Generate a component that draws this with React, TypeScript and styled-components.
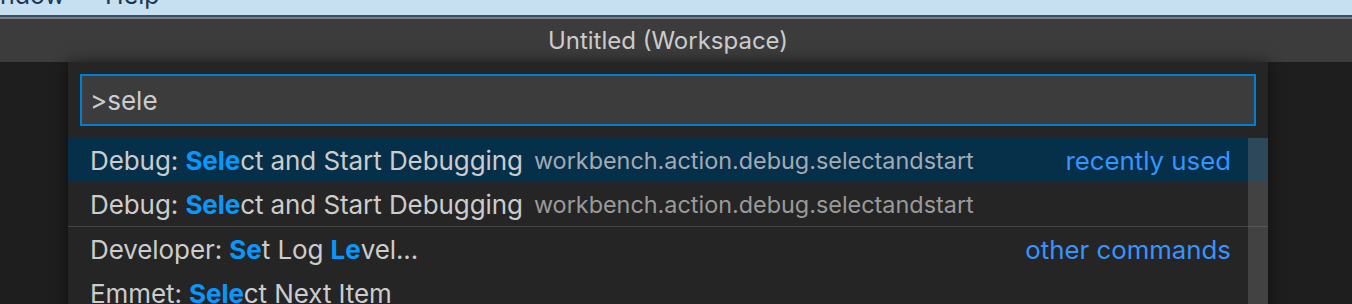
import React from 'react';
import styled, { createGlobalStyle } from 'styled-components';

const GlobalStyle = createGlobalStyle`
  html, body {
    margin: 0;
    padding: 0;
    background: #1e1e1e;
    overflow: hidden;
  }
  body {
    font-family: Inter, "Liberation Sans", sans-serif;
  }
`;

type Part = { text: string; hit?: boolean };

type Command = {
  id: string;
  label: Part[];
  description?: string;
  detail?: string;
  selected?: boolean;
  separatorBefore?: boolean;
};

const commands: Command[] = [
  {
    id: 'debug-recent',
    label: [{ text: 'Debug: ' }, { text: 'Sele', hit: true }, { text: 'ct and Start Debugging' }],
    description: 'workbench.action.debug.selectandstart',
    detail: 'recently used',
    selected: true,
  },
  {
    id: 'debug',
    label: [{ text: 'Debug: ' }, { text: 'Sele', hit: true }, { text: 'ct and Start Debugging' }],
    description: 'workbench.action.debug.selectandstart',
  },
  {
    id: 'log-level',
    label: [
      { text: 'Developer: ' },
      { text: 'Se', hit: true },
      { text: 't Log ' },
      { text: 'Le', hit: true },
      { text: 'vel...' },
    ],
    detail: 'other commands',
    separatorBefore: true,
  },
  {
    id: 'emmet',
    label: [{ text: 'Emmet: ' }, { text: 'Sele', hit: true }, { text: 'ct Next Item' }],
  },
];

const Window = styled.div`
  width: 1352px;
  height: 304px;
  display: flex;
  flex-direction: column;
  overflow: hidden;
`;

const MenuBar = styled.div`
  height: 15px;
  flex: none;
  display: flex;
  gap: 40px;
  background: #c6dff1;
  border-bottom: 2px solid #34506c;
  overflow: hidden;
`;

const MenuItem = styled.span`
  font-size: 25px;
  line-height: 26px;
  margin-top: -18px;
  color: #1d3652;
  white-space: nowrap;
`;

const TitleBar = styled.div`
  height: 43px;
  flex: none;
  display: flex;
  align-items: center;
  justify-content: center;
  padding-right: 16px;
  background: #3c3c3c;
  border-top: 2px solid #7d7d7d;
  color: #cccccc;
  font-size: 24px;
`;

const Workbench = styled.div`
  flex: 1;
  display: flex;
  padding-left: 68px;
  background: #1e1e1e;
`;

const QuickPick = styled.div`
  position: relative;
  width: 1200px;
  padding-top: 12px;
  background: #252526;
  box-shadow: 0 0 14px rgba(0, 0, 0, 0.55);
`;

const InputBox = styled.div`
  margin: 0 12px;
  height: 48px;
  display: flex;
  align-items: center;
  padding: 0 8px;
  background: #3c3c3c;
  border: 2px solid #007fd4;
`;

const Input = styled.input`
  flex: 1;
  border: 0;
  outline: none;
  background: transparent;
  padding: 0;
  color: #cccccc;
  font-family: Inter, "Liberation Sans", sans-serif;
  font-size: 26px;
`;

const List = styled.div`
  margin-top: 12px;
  display: flex;
  flex-direction: column;
`;

const Row = styled.div<{ $selected?: boolean; $separator?: boolean }>`
  height: 44px;
  flex: none;
  display: flex;
  align-items: center;
  padding: 0 37px 0 22px;
  background: ${(p) => (p.$selected ? '#062f4a' : 'transparent')};
  border-top: ${(p) => (p.$separator ? '1px solid #44444a' : 'none')};
  white-space: nowrap;
`;

const Label = styled.span`
  font-size: 26px;
  letter-spacing: -0.08px;
  color: #cccccc;
`;

const Hit = styled.span`
  font-weight: 700;
  color: #0a97fb;
`;

const Description = styled.span<{ $selected?: boolean }>`
  margin-left: 11px;
  font-size: 23.4px;
  color: ${(p) => (p.$selected ? '#a2abb3' : '#9a9a9a')};
`;

const Detail = styled.span`
  margin-left: auto;
  font-size: 25.8px;
  color: #3794ff;
`;

const Scrollbar = styled.div`
  position: absolute;
  top: 76px;
  right: 0;
  bottom: 0;
  width: 20px;
  background: rgba(121, 121, 121, 0.35);
`;

const App = (): JSX.Element => (
  <React.Fragment>
    <GlobalStyle />
    <Window>
      <MenuBar>
        <MenuItem>ndow</MenuItem>
        <MenuItem>Help</MenuItem>
      </MenuBar>
      <TitleBar>Untitled (Workspace)</TitleBar>
      <Workbench>
        <QuickPick>
          <InputBox>
            <Input readOnly value=">sele" />
          </InputBox>
          <List>
            {commands.map((cmd) => (
              <Row key={cmd.id} $selected={cmd.selected} $separator={cmd.separatorBefore}>
                <Label>
                  {cmd.label.map((part, i) =>
                    part.hit ? <Hit key={i}>{part.text}</Hit> : <React.Fragment key={i}>{part.text}</React.Fragment>
                  )}
                </Label>
                {cmd.description && <Description $selected={cmd.selected}>{cmd.description}</Description>}
                {cmd.detail && <Detail>{cmd.detail}</Detail>}
              </Row>
            ))}
          </List>
          <Scrollbar />
        </QuickPick>
      </Workbench>
    </Window>
  </React.Fragment>
);

export default App;
